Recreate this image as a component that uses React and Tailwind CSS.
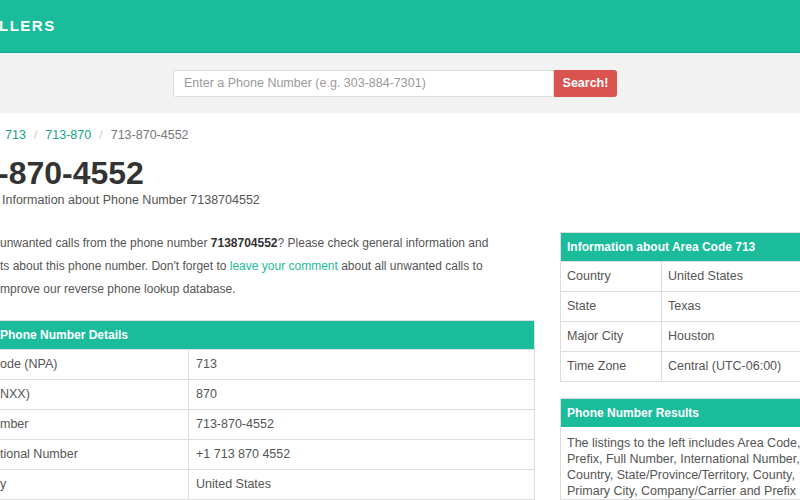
import React from 'react';

const detailRows = [
  ['ode (NPA)', '713'],
  ['NXX)', '870'],
  ['mber', '713-870-4552'],
  ['tional Number', '+1 713 870 4552'],
  ['y', 'United States'],
  ['', ''],
];

const areaRows = [
  ['Country', 'United States'],
  ['State', 'Texas'],
  ['Major City', 'Houston'],
  ['Time Zone', 'Central (UTC-06:00)'],
];

export default function App() {
  return (
    <div className="w-[800px] h-[500px] overflow-hidden bg-white text-[#555] font-['Liberation_Sans',Arial,sans-serif]">
      {/* Top bar */}
      <div className="h-[53px] bg-[#1abc9c] border-b border-[#17a98b] flex items-center">
        <span className="text-white font-bold text-[15px] tracking-[1.5px] -ml-[1px]">LLERS</span>
      </div>

      {/* Search */}
      <div className="h-[60px] bg-[#f2f2f2] flex items-center pl-[173px]">
        <div className="flex h-[27px]">
          <input
            className="w-[381px] h-full bg-white border border-[#ddd] rounded-l-[3px] px-[10px] text-[12.5px] text-[#555] placeholder:text-[#9a9a9a] outline-none"
            placeholder="Enter a Phone Number (e.g. 303-884-7301)"
          />
          <button className="w-[63px] h-full bg-[#d9534f] text-white font-semibold text-[12.5px] rounded-r-[3px]">
            Search!
          </button>
        </div>
      </div>

      {/* Breadcrumb */}
      <div className="pt-[5px] flex items-center gap-[8px] text-[12.5px] pl-[5px] h-[40px]">
        <a className="text-[#16a085]">713</a>
        <span className="text-[#ccc]">/</span>
        <a className="text-[#16a085]">713-870</a>
        <span className="text-[#ccc]">/</span>
        <span className="text-[#777]">713-870-4552</span>
      </div>

      <h1 className="mt-[5px] text-[32px] leading-[30px] font-bold text-[#333] -ml-[2px]">-870-4552</h1>
      <p className="mt-[2px] text-[12.5px] leading-[20px] text-[#555] pl-[2px]">
        Information about Phone Number 7138704552
      </p>

      <div className="flex gap-[25px] mt-[22px]">
        {/* Left column */}
        <div className="w-[535px] shrink-0">
          <p className="text-[12px] leading-[23px] text-[#555] whitespace-nowrap">
            unwanted calls from the phone number <b className="text-[#333]">7138704552</b>? Please check general information and
            <br />
            ts about this phone number. Don't forget to <a className="text-[#1abc9c]">leave your comment</a> about all unwanted calls to
            <br />
            mprove our reverse phone lookup database.
          </p>

          <div className="mt-[19px] border border-[#ddd] border-l-0">
            <div className="h-[28px] bg-[#1abc9c] text-white font-bold text-[12px] flex items-center">
              Phone Number Details
            </div>
            {detailRows.map(([k, v], i) => (
              <div key={i} className="flex h-[30px] border-t border-[#ddd] text-[12.5px]">
                <div className="w-[189px] border-r border-[#ddd] flex items-center">{k}</div>
                <div className="flex-1 flex items-center px-[7px]">{v}</div>
              </div>
            ))}
          </div>
        </div>

        {/* Right column */}
        <div className="w-[260px] shrink-0">
          <div className="border border-[#ddd] border-r-0">
            <div className="h-[28px] bg-[#1abc9c] text-white font-bold text-[12px] flex items-center px-[6px]">
              Information about Area Code 713
            </div>
            {areaRows.map(([k, v], i) => (
              <div key={i} className="flex h-[30px] border-t border-[#ddd] text-[12.5px]">
                <div className="w-[101px] border-r border-[#ddd] flex items-center px-[6px]">{k}</div>
                <div className="flex-1 flex items-center px-[6px] whitespace-nowrap">{v}</div>
              </div>
            ))}
          </div>

          <div className="mt-[16px] border border-[#ddd] border-r-0">
            <div className="h-[28px] bg-[#1abc9c] text-white font-bold text-[12px] flex items-center px-[6px]">
              Phone Number Results
            </div>
            <p className="px-[6px] pt-[8px] text-[12.5px] leading-[16px] whitespace-nowrap">
              The listings to the left includes Area Code,
              <br />
              Prefix, Full Number, International Number,
              <br />
              Country, State/Province/Territory, County,
              <br />
              Primary City, Company/Carrier and Prefix
            </p>
          </div>
        </div>
      </div>
    </div>
  );
}
